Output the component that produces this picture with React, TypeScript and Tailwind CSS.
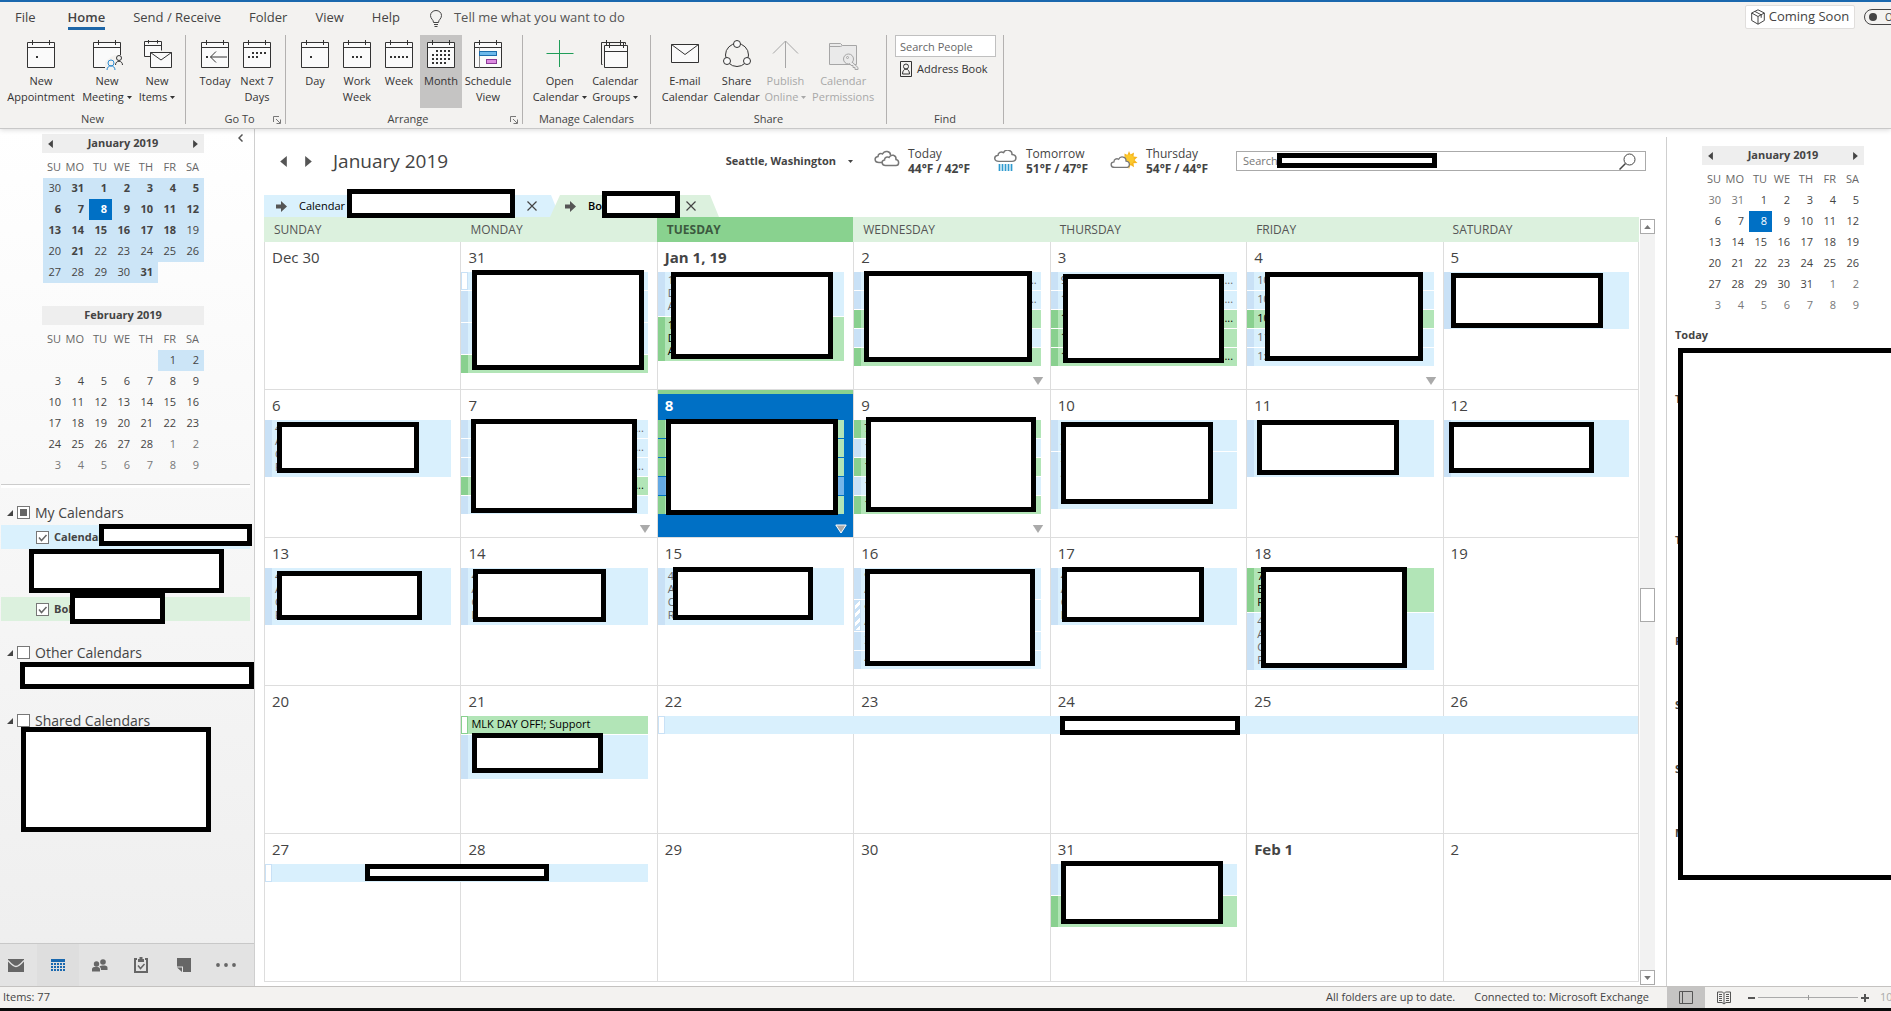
import type { ReactNode } from "react";
import clsx from "clsx";

/* ---------- small shared pieces ---------- */

// Black-framed white box that hides private text
function Redaction({ className }: { className: string }) {
  return <div aria-hidden className={clsx("absolute z-10 border-5 border-black bg-white", className)} />;
}

function Caret({ className }: { className?: string }) {
  return (
    <svg width="5" height="3" viewBox="0 0 5 3" className={clsx("inline-block", className)}>
      <path d="M0 0h5L2.5 3z" fill="currentColor" />
    </svg>
  );
}

function Arrow({ dir, className }: { dir: "left" | "right"; className?: string }) {
  return (
    <svg width="6" height="10" viewBox="0 0 6 10" className={className}>
      <path d={dir === "left" ? "M6 0v10L0 5z" : "M0 0v10l6-5z"} fill="currentColor" />
    </svg>
  );
}

/* ---------- ribbon icons ---------- */

function Dots({ rows }: { rows: [number, number[]][] }) {
  return (
    <>
      {rows.map(([y, xs]) => xs.map((x) => <rect key={`${x}-${y}`} x={x} y={y} width="2" height="2" fill="#333" stroke="none" />))}
    </>
  );
}

function CalIcon({ children }: { children?: ReactNode }) {
  return (
    <svg width="32" height="30" viewBox="0 0 32 30" fill="none" stroke="#333">
      <path d="M2.5 2.5h27v25h-27z" fill="#fafafa" />
      <path d="M2.5 7.5h27M7.5 0v5M24.5 0v5" />
      {children}
    </svg>
  );
}

const iconToday = (
  <CalIcon>
    <Dots rows={[[16, [7]]]} />
    <path d="M11.5 17H28M17 11.5L11.5 17l5.5 5.5" />
  </CalIcon>
);

const iconMeeting = (
  <svg width="32" height="30" viewBox="0 0 32 30" fill="none" stroke="#333">
    <path d="M2.5 2.5h27v25h-27z" fill="#fafafa" />
    <path d="M2.5 7.5h27M7.5 0v5M24.5 0v5" />
    <path d="M14 30V22l6-5 4-2h8v15z" fill="#f3f2f0" stroke="none" />
    <circle cx="28" cy="18" r="2.5" />
    <path d="M24.5 25c0-5 7-5 7 0" />
    <circle cx="20" cy="23" r="3" stroke="#2b8ad0" />
    <path d="M16 30c0-5.5 8-5.5 8 0" stroke="#2b8ad0" />
  </svg>
);

const iconItems = (
  <svg width="32" height="30" viewBox="0 0 32 30" fill="none" stroke="#333">
    <path d="M9.5 16.5h-6v-15h17v9" fill="#fafafa" />
    <path d="M3.5 5.5h17M7.5 0v3.5M16.5 0v3.5" />
    <path d="M9.5 12.5h21v15h-21z" fill="#fafafa" />
    <path d="M9.5 12.5L20 20l10.5-7.5" />
  </svg>
);

const iconSchedule = (
  <CalIcon>
    <path d="M7.5 7.5v20" stroke="#888" />
    <rect x="7.5" y="11.5" width="17" height="4" fill="#6cb8ea" stroke="#1c6cab" />
    <rect x="14.5" y="19.5" width="10" height="4" fill="#dc8be0" stroke="#8b3a96" />
  </CalIcon>
);

const iconPlus = (
  <svg width="32" height="30" viewBox="0 0 32 30" stroke="#1f9d58">
    <path d="M2.5 13.5h27M15.5 0v27" />
  </svg>
);

const iconGroups = (
  <svg width="32" height="30" viewBox="0 0 32 30" fill="none" stroke="#333">
    <path d="M3.5 24.5h-1v-22h24v2M7.5 0v5M21.5 0v5" />
    <path d="M5.5 5.5h23v22h-23z" fill="#fafafa" />
    <path d="M5.5 11.5h23M10.5 3v5M24.5 3v5" />
  </svg>
);

const iconMail = (
  <svg width="32" height="30" viewBox="0 0 32 30" fill="none" stroke="#333">
    <path d="M2.5 4.5h27v18h-27z" fill="#fafafa" />
    <path d="M2.5 4.5L16 14.5l13.5-10" />
  </svg>
);

const iconShare = (
  <svg width="32" height="30" viewBox="0 0 32 30" fill="none" stroke="#333">
    <circle cx="16" cy="15" r="11.5" />
    <circle cx="16" cy="4" r="3.5" fill="#fafafa" />
    <circle cx="6" cy="21" r="3.5" fill="#fafafa" />
    <circle cx="26" cy="21" r="3.5" fill="#fafafa" />
  </svg>
);

const iconPublish = (
  <svg width="32" height="30" viewBox="0 0 32 30" fill="none" stroke="#a6a6a6">
    <path d="M16.5 28V1M4 13.5L16.5 1 29 13.5" />
  </svg>
);

const iconPermissions = (
  <svg width="32" height="30" viewBox="0 0 32 30" fill="none" stroke="#a6a6a6">
    <path d="M2.5 24.5v-21h11l2 2h14v19z" fill="#eaeaea" />
    <path d="M2.5 6.5h11l2-1" />
    <circle cx="21.5" cy="19" r="5" fill="#eaeaea" />
    <circle cx="20.5" cy="17.5" r="1" />
    <path d="M25 22l6 5.5v2h-3v-2h-2v-2h-2l-1.500-2" fill="#eaeaea" />
  </svg>
);

/* ---------- ribbon ---------- */

type RibbonButtonProps = {
  icon: ReactNode;
  lines: string[];
  width: string;
  caret?: boolean;
  active?: boolean;
  disabled?: boolean;
};

function RibbonButton({ icon, lines, width, caret, active, disabled }: RibbonButtonProps) {
  return (
    <button
      type="button"
      disabled={disabled}
      className={clsx(
        "flex h-[73px] flex-col items-center whitespace-nowrap pt-[5px] text-[11px] leading-4",
        width,
        active && "bg-[#c5c4c3]",
        disabled ? "text-[#a8a8a8]" : "text-[#333]",
      )}
    >
      {icon}
      <span className="mt-[3px]">{lines[0]}</span>
      {lines[1] && (
        <span className="flex items-center gap-[3px]">
          {lines[1]}
          {caret && <Caret />}
        </span>
      )}
    </button>
  );
}

function RibbonGroup({ title, width, launcher, children }: { title: string; width: string; launcher?: boolean; children: ReactNode }) {
  return (
    <section className={clsx("flex h-[89px] shrink-0 flex-col border-r border-[#b3b1b0]", width)}>
      <div className="flex flex-1 items-start">{children}</div>
      <div className="relative text-center text-[11px] leading-[10px] text-[#444]">
        {title}
        {launcher && (
          <button type="button" aria-label={`${title} options`} className="absolute right-1 top-0.5">
            <svg width="8" height="8" viewBox="0 0 8 8" fill="none" stroke="#777">
              <path d="M.5 6V.5H6M3 3l4 4M7.5 3.5v4h-4" />
            </svg>
          </button>
        )}
      </div>
    </section>
  );
}

function Ribbon() {
  return (
    <div className="flex pt-px">
      <RibbonGroup title="New" width="w-[186px]">
        <RibbonButton icon={<CalIcon><Dots rows={[[16, [11]]]} /></CalIcon>} lines={["New", "Appointment"]} width="w-[82px]" />
        <RibbonButton icon={iconMeeting} lines={["New", "Meeting"]} width="w-[50px]" caret />
        <RibbonButton icon={iconItems} lines={["New", "Items"]} width="w-[50px]" caret />
      </RibbonGroup>
      <RibbonGroup title="Go To" width="w-[100px] pl-2" launcher>
        <RibbonButton icon={iconToday} lines={["Today"]} width="w-[42px]" />
        <RibbonButton
          icon={<CalIcon><Dots rows={[[12, [11, 15, 19, 23]], [16, [7, 11, 15]]]} /></CalIcon>}
          lines={["Next 7", "Days"]}
          width="w-[42px]"
        />
      </RibbonGroup>
      <RibbonGroup title="Arrange" width="w-[237px] pl-2" launcher>
        <RibbonButton icon={<CalIcon><Dots rows={[[16, [11]]]} /></CalIcon>} lines={["Day"]} width="w-[42px]" />
        <RibbonButton icon={<CalIcon><Dots rows={[[16, [11, 15, 19]]]} /></CalIcon>} lines={["Work", "Week"]} width="w-[42px]" />
        <RibbonButton icon={<CalIcon><Dots rows={[[16, [7, 11, 15, 19, 23]]]} /></CalIcon>} lines={["Week"]} width="w-[42px]" />
        <RibbonButton
          icon={
            <CalIcon>
              <Dots rows={[[10, [11, 15, 19, 23]], [14, [7, 11, 15, 19, 23]], [18, [7, 11, 15, 19, 23]], [22, [7, 11, 15, 19]]]} />
            </CalIcon>
          }
          lines={["Month"]}
          width="w-[42px]"
          active
        />
        <RibbonButton icon={iconSchedule} lines={["Schedule", "View"]} width="w-[52px]" />
      </RibbonGroup>
      <RibbonGroup title="Manage Calendars" width="w-[128px] px-2">
        <RibbonButton icon={iconPlus} lines={["Open", "Calendar"]} width="w-[58px]" caret />
        <RibbonButton icon={iconGroups} lines={["Calendar", "Groups"]} width="w-[54px]" caret />
      </RibbonGroup>
      <RibbonGroup title="Share" width="w-[236px] px-2">
        <RibbonButton icon={iconMail} lines={["E-mail", "Calendar"]} width="w-[52px]" />
        <RibbonButton icon={iconShare} lines={["Share", "Calendar"]} width="w-[52px]" />
        <RibbonButton icon={iconPublish} lines={["Publish", "Online"]} width="w-[46px]" caret disabled />
        <RibbonButton icon={iconPermissions} lines={["Calendar", "Permissions"]} width="w-[70px]" disabled />
      </RibbonGroup>
      <RibbonGroup title="Find" width="w-[117px] px-2">
        <div className="w-full">
          <input
            aria-label="Search People"
            placeholder="Search People"
            className="block h-[22px] w-[101px] border border-[#c0c0c0] bg-white px-1 text-[11px] outline-none placeholder:text-[#666]"
          />
          <button type="button" className="mt-1 flex items-center gap-[5px] whitespace-nowrap pl-[5px] text-[11px] text-[#333]">
            <svg width="12" height="16" viewBox="0 0 12 16" fill="none" stroke="#333">
              <path d="M.5.5h11v15H.5z" />
              <circle cx="6" cy="5.5" r="2.5" />
              <path d="M2.500 13c0-6.500 7-6.500 7 0z" />
            </svg>
            Address Book
          </button>
        </div>
      </RibbonGroup>
    </div>
  );
}

function Header() {
  const tab = "h-7 leading-[30px]";
  return (
    <header className="relative z-20 h-[129px] border-b border-[#c8c8c8] border-t-2 border-t-[#1a68ae] bg-[#f3f2f0] shadow-[0_1px_5px_rgba(0,0,0,0.15)]">
      <div className="flex h-8 items-start text-[13px] text-[#444]">
        <nav className="flex items-start gap-7 pl-[15px]">
          <a href="#file" className={clsx(tab, "mr-1")}>File</a>
          <a href="#home" className="h-7 border-b-3 border-[#1c66a8] font-semibold leading-[30px]">Home</a>
          <a href="#send" className={tab}>Send / Receive</a>
          <a href="#folder" className={tab}>Folder</a>
          <a href="#view" className={tab}>View</a>
          <a href="#help" className={tab}>Help</a>
        </nav>
        <button type="button" className="ml-[30px] flex h-8 items-center gap-3 text-[#555]">
          <svg width="12" height="17" viewBox="0 0 12 17" fill="none" stroke="#444">
            <path d="M3.5 12.5C3.5 9.5.5 9 .5 5.5a5.500 5 0 0 1 11 0c0 3.500-3 4-3 7zM4 14.5h4M4.500 16.500h3" />
          </svg>
          Tell me what you want to do
        </button>
        <div className="ml-auto flex items-center gap-[9px] pt-[3px]">
          <button type="button" className="flex h-6 w-[110px] items-center justify-center gap-1 whitespace-nowrap rounded-xs border border-[#e0dedc] bg-white">
            <svg width="14" height="16" viewBox="0 0 14 16" fill="none" stroke="#444" className="shrink-0">
              <path d="M7 .8l6.300 3.200v7.500L7 15.200.700 11.500V4zM.700 4L7 7.500 13.300 4M7 7.500v7.700M3.800 2.400l6.400 3.400v3" />
            </svg>
            Coming Soon
          </button>
          <button type="button" role="switch" aria-checked="false" className="-mr-6 flex h-4 w-[51px] items-center gap-2 rounded-full border border-[#444] pl-1 text-[10px]">
            <span className="size-2 rounded-full bg-[#444]" />
            Off
          </button>
        </div>
      </div>
      <Ribbon />
    </header>
  );
}

/* ---------- date navigators ---------- */

type MiniProps = {
  title: string;
  first: number; // offset of the first day shown
  prevDays: number[];
  count: number;
  total: number;
  bold?: number[];
  shaded?: (i: number) => boolean;
  today?: number;
  arrows?: boolean;
};

function MiniCalendar({ title, first, prevDays, count, total, bold = [], shaded, today, arrows }: MiniProps) {
  const cells = Array.from({ length: total }, (_, i) => {
    if (i < first) return { n: prevDays[i] ?? 0, out: true };
    const n = i - first + 1;
    return n <= count ? { n, out: false } : { n: n - count, out: true };
  });
  const rows = Array.from({ length: Math.ceil(total / 7) }, (_, w) => cells.slice(w * 7, w * 7 + 7));

  return (
    <div className="w-[162px]">
      <div className="flex h-[19px] items-center justify-between bg-[#eee] px-1.5 text-[11px] font-bold text-[#444]">
        {arrows ? <button type="button" aria-label="Previous month"><Arrow dir="left" className="h-2 w-[5px]" /></button> : <span />}
        {title}
        {arrows ? <button type="button" aria-label="Next month"><Arrow dir="right" className="h-2 w-[5px]" /></button> : <span />}
      </div>
      <table className="ml-px w-[161px] table-fixed border-collapse text-right text-[11px] text-[#444]">
        <thead>
          <tr className="h-[25px]">
            {["SU", "MO", "TU", "WE", "TH", "FR", "SA"].map((d) => (
              <th key={d} className="p-0 pr-[5px] pt-[3px] font-normal text-[#666]">
                <span className="flex justify-end">{d}</span>
              </th>
            ))}
          </tr>
        </thead>
        <tbody>
          {rows.map((week, w) => (
            <tr key={w} className="h-[21px]">
              {week.map(({ n, out }, d) => {
                const i = w * 7 + d;
                const isToday = today !== undefined && !out && n === today;
                return (
                  <td
                    key={d}
                    className={clsx(
                      "p-0 pb-px pr-[5px] leading-5",
                      isToday ? "bg-[#0070c5] text-white" : shaded?.(i) && n > 0 && "bg-[#cce5f7]",
                      bold.includes(i) && "font-bold",
                      out && !shaded?.(i) && "text-[#777]",
                    )}
                  >
                    {n > 0 ? n : ""}
                  </td>
                );
              })}
            </tr>
          ))}
        </tbody>
      </table>
    </div>
  );
}

/* ---------- left pane ---------- */

function Check({ state, label }: { state: "on" | "off" | "mixed"; label: string }) {
  return (
    <span className="relative flex size-[13px] shrink-0">
      <input
        type="checkbox"
        aria-label={label}
        defaultChecked={state === "on"}
        className="size-[13px] appearance-none border border-[#777] bg-white"
      />
      {state === "on" && (
        <svg viewBox="0 0 13 13" fill="none" stroke="#666" strokeWidth="1.5" className="pointer-events-none absolute inset-0">
          <path d="M3 6.5l2.500 3L10.500 4" />
        </svg>
      )}
      {state === "mixed" && <span className="pointer-events-none absolute inset-[3px] bg-[#666]" />}
    </span>
  );
}

function GroupHeading({ name, state }: { name: string; state: "off" | "mixed" }) {
  return (
    <div className="flex h-[25px] items-center pl-[7px] text-sm text-[#444]">
      <svg width="6" height="6" viewBox="0 0 6 6" className="mr-1">
        <path d="M6 0v6H0z" fill="#444" />
      </svg>
      <Check state={state} label={name} />
      <span className="ml-[5px]">{name}</span>
    </div>
  );
}

function CalendarRow({ name, tint }: { name: string; tint: string }) {
  return (
    <div className={clsx("ml-px mr-1 flex h-6 items-center gap-[5px] pl-[35px] text-[11px] font-bold text-[#444]", tint)}>
      <Check state="on" label={name} />
      {name}
    </div>
  );
}

function NavButton({ label, width, children }: { label: string; width: string; children: ReactNode }) {
  return (
    <button type="button" aria-label={label} className={clsx("flex items-center justify-center", width)}>
      {children}
    </button>
  );
}

// Cell indexes of the days that have appointments
const janBold = [1, 2, 3, 4, 5, 6, 7, 8, 9, 10, 11, 12, 13, 14, 15, 16, 17, 18, 19, 22, 32];

function Sidebar() {
  return (
    <aside className="flex w-[255px] shrink-0 flex-col border-r border-[#cfcfcf] bg-gradient-to-b from-white to-[#eee]">
      <div className="relative pl-[42px] pt-[5px]">
        <MiniCalendar title="January 2019" first={2} prevDays={[30, 31]} count={31} total={33} bold={janBold} shaded={(i) => i < 33} today={8} arrows />
        <div className="h-[23px]" />
        <MiniCalendar title="February 2019" first={5} prevDays={[]} count={28} total={42} shaded={(i) => i < 7} />
        <button type="button" aria-label="Minimize the folder pane" className="absolute right-[11px] top-[5px]">
          <svg width="5" height="8" viewBox="0 0 5 8" fill="none" stroke="#555" strokeWidth="1.5">
            <path d="M4.500.5L1 4l3.500 3.500" />
          </svg>
        </button>
      </div>
      <div className="ml-px mr-1 mt-2 h-1 border-t border-[#ccc] bg-white" />

      <div className="relative flex-1 pt-3">
        <GroupHeading name="My Calendars" state="mixed" />
        <CalendarRow name="Calendar" tint="bg-[#daf1fd]" />
        <div className="h-12" />
        <CalendarRow name="Bob" tint="bg-[#dcf1de]" />
        <div className="h-[19px]" />
        <GroupHeading name="Other Calendars" state="off" />
        <div className="h-[43px]" />
        <GroupHeading name="Shared Calendars" state="off" />
        <Redaction className="left-[99px] top-9 h-[22px] w-[153px]" />
        <Redaction className="left-[29px] top-[61px] h-11 w-[195px]" />
        <Redaction className="left-[70px] top-[105px] h-[31px] w-[95px]" />
        <Redaction className="left-5 top-[174px] h-[27px] w-[234px]" />
        <Redaction className="left-[21px] top-[239px] h-[105px] w-[190px]" />
      </div>

      <nav className="flex h-[43px] items-stretch border-t border-[#c8c8c8] bg-[#e3e3e3] text-[#666]">
        <NavButton label="Mail" width="w-[37px] pr-[5px]">
          <svg width="16" height="13" viewBox="0 0 16 13">
            <path d="M0 0h16v13H0z" fill="currentColor" />
            <path d="M0 1.500C3 5 6 7.500 8 7.500S13 5 16 1.500" fill="none" stroke="#e3e3e3" strokeWidth="1.3" />
          </svg>
        </NavButton>
        <NavButton label="Calendar" width="w-[42px] bg-[#dedede]">
          <svg width="14" height="13" viewBox="0 0 14 13" fill="#1a68ae">
            <path d="M0 0h14v3H0z" />
            {[4, 7, 10].map((y) => [0, 3, 6, 9, 12].map((x) => <rect key={`${x}-${y}`} x={x} y={y} width="2" height="2" />))}
          </svg>
        </NavButton>
        <NavButton label="People" width="w-[41px]">
          <svg width="16" height="13" viewBox="0 0 16 13" fill="currentColor">
            <circle cx="4.500" cy="5" r="2.700" />
            <circle cx="11" cy="3" r="2.800" />
            <path d="M0 12.500V10c0-3 8-3 8 0v2.500zM7.500 7.500c2-1.500 8-1.500 8 1V11H9c0-2-.5-2.500-1.500-3.500z" />
          </svg>
        </NavButton>
        <NavButton label="Tasks" width="w-[42px]">
          <svg width="14" height="16" viewBox="0 0 14 16" fill="none" stroke="currentColor" strokeWidth="2">
            <path d="M3 2H1v13h12V2h-2" />
            <path d="M4 3.500h6M7 0v3" strokeWidth="3" />
            <path d="M4 8.500l2.500 3L10.500 7" strokeWidth="1.5" />
          </svg>
        </NavButton>
        <NavButton label="Notes" width="w-[43px]">
          <svg width="14" height="14" viewBox="0 0 14 14" fill="currentColor">
            <path d="M0 0h14v14H6V8.500H0z" />
            <path d="M0 9.500h5V14z" />
          </svg>
        </NavButton>
        <NavButton label="More" width="w-[41px]">
          <svg width="20" height="4" viewBox="0 0 20 4" fill="currentColor">
            <circle cx="2" cy="2" r="1.900" />
            <circle cx="10" cy="2" r="1.900" />
            <circle cx="18" cy="2" r="1.900" />
          </svg>
        </NavButton>
      </nav>
    </aside>
  );
}

/* ---------- month view ---------- */

type Ev = {
  c: "blue" | "green" | "busy";
  lines?: string[];
  n?: number; // text rows the event takes
  bar?: "free" | "tentative";
  more?: boolean;
};

type Day = { label: string; bold?: boolean; evs?: Ev[]; box?: string; overflow?: boolean; today?: boolean };

const b = (...lines: string[]): Ev => ({ c: "blue", lines });
const g = (...lines: string[]): Ev => ({ c: "green", lines });
const more = (e: Ev): Ev => ({ ...e, more: true });

const weeks: Day[][] = [
  [
    { label: "Dec 30" },
    { label: "31", evs: [{ c: "blue", bar: "free" }, { c: "blue", n: 2 }, { c: "blue", n: 2 }, { c: "green" }], box: "left-[11px] top-7 h-[100px] w-[172px]" },
    { label: "Jan 1, 19", bold: true, evs: [b("1", "D", "A"), g("1", "D", "A")], box: "left-[13px] top-[30px] h-[87px] w-[162px]" },
    { label: "2", evs: [more(b("9")), more(b("9")), g("9"), b(), g()], box: "left-2.5 top-[29px] h-[91px] w-[168px]", overflow: true },
    { label: "3", evs: [more(b("9")), more(b("1")), more(g("1")), g("1"), more(g("1"))], box: "left-3 top-8 h-[89px] w-[161px]" },
    { label: "4", evs: [b("10"), b("10"), g("10"), b("11"), b("1:")], box: "left-[18px] top-[30px] h-[89px] w-[158px]", overflow: true },
    { label: "5", evs: [{ c: "blue", n: 4 }], box: "left-[7px] top-[31px] h-[55px] w-[152px]" },
  ],
  [
    { label: "6", evs: [b("4", "A", "C", "R")], box: "left-3 top-8 h-[51px] w-[142px]" },
    { label: "7", evs: [more(b()), more(b()), more(b()), more(g()), b()], box: "left-2.5 top-[29px] h-[94px] w-[166px]", overflow: true },
    { label: "8", bold: true, today: true, evs: [g(), g(), g(), { c: "busy" }, g()], box: "left-2 top-[29px] h-24 w-[172px]", overflow: true },
    { label: "9", evs: [g("7"), b("1"), g("1"), b("1"), g("1")], box: "left-3 top-[27px] h-[95px] w-[170px]", overflow: true },
    { label: "10", evs: [b("1", "A"), b("4", "A", "C", "R")], box: "left-2.5 top-8 h-[82px] w-[152px]" },
    { label: "11", evs: [b("4", "A", "C", "R")], box: "left-2.5 top-[30px] h-[55px] w-[142px]" },
    { label: "12", evs: [{ c: "blue", n: 4 }], box: "left-[5px] top-8 h-[51px] w-[145px]" },
  ],
  [
    { label: "13", evs: [b("4", "A", "C", "R")], box: "left-3 top-[33px] h-[49px] w-[145px]" },
    { label: "14", evs: [b("4", "A", "C", "R")], box: "left-3 top-[31px] h-[53px] w-[133px]" },
    { label: "15", evs: [b("4", "A", "C", "R")], box: "left-[15px] top-[29px] h-[53px] w-[140px]" },
    { label: "16", evs: [b("9", "A"), { ...b("9", "A"), bar: "tentative" }, b("3"), b("4")], box: "left-[11px] top-[31px] h-[97px] w-[170px]" },
    { label: "17", evs: [b("4", "A", "C", "R")], box: "left-[11px] top-[29px] h-[55px] w-[142px]" },
    { label: "18", evs: [g("7", "B", "R"), b("4", "A", "C", "R")], box: "left-3.5 top-[29px] h-[101px] w-[146px]" },
    { label: "19" },
  ],
  [
    { label: "20" },
    { label: "21", evs: [{ c: "green", lines: ["MLK DAY OFF!; Support"], bar: "free" }, { c: "blue", n: 3 }], box: "left-[11px] top-[47px] h-10 w-[131px]" },
    { label: "22" },
    { label: "23" },
    { label: "24" },
    { label: "25" },
    { label: "26" },
  ],
  [
    { label: "27" },
    { label: "28" },
    { label: "29" },
    { label: "30" },
    { label: "31", evs: [{ c: "blue", n: 2 }, { c: "green", n: 2 }], box: "left-2.5 top-[27px] h-[63px] w-[162px]" },
    { label: "Feb 1", bold: true },
    { label: "2" },
  ],
];

// Multi-day bars, drawn over the cells of their week
const spans: Record<number, { cols: string; box: string }> = {
  3: { cols: "col-start-3 col-span-5 mr-px", box: "left-[41%] top-0 h-[19px] w-[180px]" },
  4: { cols: "col-start-1 col-span-2 mr-[9px]", box: "left-[26%] top-0 h-[17px] w-[184px]" },
};

const colStart = ["col-start-1", "col-start-2", "col-start-3", "col-start-4", "col-start-5", "col-start-6", "col-start-7"];
const evHeight = ["", "h-[18px]", "h-[31px]", "h-11", "h-[57px]"];
const evBody = { blue: "bg-[#d9f0fd] text-[#666]", green: "bg-[#b2e5b7] text-black", busy: "bg-[#75b5e8] text-white" };
const evBar = { blue: "bg-[#c9e1f6]", green: "bg-[#89d08f]", busy: "bg-[#64a9e3]" };
const freeBar = { blue: "border border-[#c9e1f6] bg-white", green: "border border-[#89d08f] bg-white", busy: "bg-white" };

function EventItem({ ev }: { ev: Ev }) {
  const lines = ev.lines ?? [];
  const n = ev.n ?? Math.max(1, lines.length);
  return (
    <div className={clsx("flex text-[11px] leading-[13px]", evHeight[n], evBody[ev.c])}>
      {ev.bar === "tentative" ? (
        <span className="w-[7px] border border-[#c9e1f6] bg-[repeating-linear-gradient(135deg,#c9e1f6_0_3px,#fff_3px_6px)]" />
      ) : (
        <span className={clsx("w-[7px]", ev.bar === "free" ? freeBar[ev.c] : evBar[ev.c])} />
      )}
      <span className="flex-1 whitespace-nowrap pl-[3px] pt-px">
        {lines.map((l, i) => (
          <span key={i} className="block">{l}</span>
        ))}
      </span>
      {ev.more && <span className="pr-1 pt-px">...</span>}
    </div>
  );
}

function DayCell({ day, col }: { day: Day; col: number }) {
  return (
    <div
      className={clsx(
        "relative row-start-1 border-b border-l border-[#ddd]",
        colStart[col],
        col === 6 && "border-r",
      )}
    >
      <div className={clsx("h-full", day.today && "bg-[#0070c5]")}>
        <div
          className={clsx(
            "h-[30px] pl-[7px] text-[15px]",
            day.today ? "border-t-4 border-[#89d28f] leading-[22px] text-white" : "leading-[30px] text-[#444]",
            day.bold && "font-bold",
          )}
        >
          {day.label}
        </div>
        <div className="mr-[9px] flex flex-col gap-px">
          {day.evs?.map((ev, i) => <EventItem key={i} ev={ev} />)}
        </div>
      </div>
      {day.box && <Redaction className={day.box} />}
      {day.overflow && (
        <svg width="12" height="10" viewBox="0 0 12 10" className="absolute bottom-[3px] right-1.5">
          <path d="M.8 1h10.400L6 9z" fill="#aaa" stroke={day.today ? "#fff" : "none"} />
        </svg>
      )}
    </div>
  );
}

function MonthGrid() {
  return (
    <div className="flex min-w-0 flex-1 flex-col">
      <div className="grid h-[25px] grid-cols-7 bg-[#dcf1de] text-xs leading-[25px] text-[#555]">
        {["SUNDAY", "MONDAY", "TUESDAY", "WEDNESDAY", "THURSDAY", "FRIDAY", "SATURDAY"].map((d) => (
          <div key={d} className={clsx("pl-2.5", d === "TUESDAY" && "bg-[#89d28f] font-bold text-[#3c5a40]")}>
            {d}
          </div>
        ))}
      </div>
      <div className="grid flex-1 grid-rows-5">
        {weeks.map((week, w) => (
          <div key={w} className="grid min-h-[148px] grid-cols-7">
            {week.map((day, i) => (
              <DayCell key={i} day={day} col={i} />
            ))}
            {spans[w] && (
              <div className={clsx("relative row-start-1 ml-px mt-[30px] flex h-[18px] bg-[#d9f0fd]", spans[w].cols)}>
                <span className="w-[7px] border border-[#c9e1f6] bg-white" />
                <Redaction className={spans[w].box} />
              </div>
            )}
          </div>
        ))}
      </div>
    </div>
  );
}

function ScrollBar() {
  const box = "absolute left-0 flex w-[15px] items-center justify-center border border-[#aaa] bg-white";
  return (
    <div className="relative ml-px mt-0.5 -mb-[3px] w-[15px] bg-[#f2f2f2]">
      <button type="button" aria-label="Scroll up" className={clsx(box, "top-0 h-[15px]")}>
        <Caret className="h-1 w-[7px] rotate-180 text-[#777]" />
      </button>
      <div className={clsx(box, "top-[369px] h-[34px]")} />
      <button type="button" aria-label="Scroll down" className={clsx(box, "bottom-0 h-[15px]")}>
        <Caret className="h-1 w-[7px] text-[#777]" />
      </button>
    </div>
  );
}

/* ---------- calendar header: title, weather, search, tabs ---------- */

const cloud = "M5 14.500C-.5 14.500-.5 8.500 4 8c0-3 3-4.500 5.500-3 2-4.500 9-3 8.500 2 5.500.5 5 7.500 0 7.500z";

const weather = [
  {
    day: "Today",
    temp: "44°F / 42°F",
    icon: (
      <svg width="26" height="22" viewBox="0 0 26 22" fill="none" stroke="#777" strokeWidth="1.5">
        <path d="M8.500 12.500H5c-5 0-5-5.500-1-6 0-3 3-3.500 4.500-2.500 2-4 8-3 8 1" />
        <path d="M11.500 15.500c-4 0-4.500-5-1-5.500 0-3 3-3.500 4.500-2.500 2-4 7.500-2.500 7 2 3.500.5 3.500 6 0 6z" fill="#fff" />
      </svg>
    ),
  },
  {
    day: "Tomorrow",
    temp: "51°F / 47°F",
    icon: (
      <svg width="26" height="22" viewBox="0 0 26 22" fill="none">
        <path d={cloud} stroke="#777" strokeWidth="1.5" transform="translate(2 -2) scale(1 .92)" />
        <path d="M7.500 14v7M10.500 14v7M13.500 14v7M16.500 14v7M19.500 14v7" stroke="#2f9bd0" strokeWidth="1.7" />
      </svg>
    ),
  },
  {
    day: "Thursday",
    temp: "54°F / 44°F",
    icon: (
      <svg width="28" height="22" viewBox="0 0 28 22" fill="none">
        <path d="M19 1l1.500 3.500 3.500-2-.5 4 4 .5-3 3 3 3-4 .3.500 4-3.500-2.300L19 19l-1.500-4-3 2V3.500l3 1.500z" fill="#f6b51e" />
        <circle cx="19" cy="9.500" r="5" fill="#fbc92e" />
        <path d={cloud} stroke="#777" strokeWidth="1.5" fill="#fff" transform="translate(.5 5) scale(.86)" />
      </svg>
    ),
  },
];

function ViewHeader() {
  return (
    <div className="flex h-16 items-center text-[#444]">
      <button type="button" aria-label="Back" className="ml-4 text-[#555]"><Arrow dir="left" className="h-[11px] w-[7px]" /></button>
      <button type="button" aria-label="Forward" className="ml-[18px] text-[#555]"><Arrow dir="right" className="h-[11px] w-[7px]" /></button>
      <h1 className="ml-[21px] whitespace-nowrap text-[19px]">January 2019</h1>
      <div className="ml-auto flex items-center whitespace-nowrap">
        <button type="button" className="flex items-center gap-3 text-[11px] font-bold">
          Seattle, Washington
          <Caret />
        </button>
        {weather.map((w) => (
          <div key={w.day} className="ml-[21px] flex w-[97px] items-center gap-2 text-xs leading-[15px]">
            <span className="shrink-0">{w.icon}</span>
            <div className="pb-px">
              <div>{w.day}</div>
              <div className="font-bold">{w.temp}</div>
            </div>
          </div>
        ))}
      </div>
      <label className="relative ml-[29px] mr-5 flex h-5 w-[410px] shrink-0 items-center border border-[#aaa]">
        <span className="sr-only">Search calendars</span>
        <input placeholder="Search" className="w-full pl-1.5 text-[11px] outline-none placeholder:text-[#777]" />
        <svg width="17" height="17" viewBox="0 0 17 17" fill="none" stroke="#444" className="mr-[9px] shrink-0">
          <circle cx="10.500" cy="6.500" r="5.500" />
          <path d="M6.500 10.500l-6 6" strokeWidth="1.5" />
        </svg>
        <Redaction className="left-10 top-px h-[15px] w-[160px]" />
      </label>
    </div>
  );
}

function TabArrow() {
  return (
    <svg width="11" height="11" viewBox="0 0 11 11">
      <path d="M0 3.500h5V0l6 5.500L5 11V7.500H0z" fill="#555" />
    </svg>
  );
}

function CloseX() {
  return (
    <svg width="10" height="10" viewBox="0 0 10 10" stroke="#444" strokeWidth="1.2">
      <path d="M.5.5l9 9M9.500.5l-9 9" />
    </svg>
  );
}

function CalendarTabs() {
  return (
    <div className="flex h-6 items-end text-[11px] text-black">
      <div className="relative flex h-[22px] w-[296px] items-center bg-[#daf1fd] pl-3">
        <TabArrow />
        <span className="ml-3">Calendar</span>
        <button type="button" aria-label="Close Calendar" className="ml-auto mr-[23px]"><CloseX /></button>
        <Redaction className="-top-1.5 left-[83px] h-[29px] w-[168px]" />
        <svg width="10" height="22" viewBox="0 0 10 22" className="absolute right-0 top-0">
          <path d="M1 0h9v22z" fill="#fff" />
          <path d="M10 0v22H0z" fill="#dcf1de" />
        </svg>
      </div>
      <div className="relative flex h-[22px] w-[159px] items-center bg-[#dcf1de] pl-[5px]">
        <TabArrow />
        <span className="ml-3 font-semibold">Bo</span>
        <button type="button" aria-label="Close Bo" className="ml-auto mr-[23px]"><CloseX /></button>
        <Redaction className="-top-1 left-[42px] h-[27px] w-[78px]" />
        <svg width="9" height="22" viewBox="0 0 9 22" className="absolute right-0 top-0">
          <path d="M0 0h9v22z" fill="#fff" />
        </svg>
      </div>
    </div>
  );
}

/* ---------- right pane ---------- */

function TodoBar() {
  return (
    <aside className="relative mt-2 w-[225px] shrink-0 overflow-hidden border-l border-[#cfcfcf] pl-2 pt-[9px]">
      <div className="pl-[27px]">
        <MiniCalendar title="January 2019" first={2} prevDays={[30, 31]} count={31} total={42} today={8} arrows />
      </div>
      <h2 className="mt-[11px] text-[11px] font-bold leading-4 text-[#444]">Today</h2>
      <ul className="mt-12 text-[11px] font-bold leading-4 text-[#444]">
        <li className="h-[141px]">T</li>
        <li className="h-[101px]">T</li>
        <li className="h-16">F</li>
        <li className="h-16">S</li>
        <li className="h-16">S</li>
        <li>M</li>
      </ul>
      <Redaction className="-right-2 left-[11px] top-[211px] h-[532px]" />
    </aside>
  );
}

function StatusBar() {
  return (
    <footer className="flex h-[22px] items-center overflow-hidden border-t border-[#c4c2c0] bg-[#f3f2f0] text-[11px] text-[#444]">
      <span className="pl-[3px]">Items: 77</span>
      <span className="ml-auto">All folders are up to date.</span>
      <span className="ml-[19px] mr-[18px]">Connected to: Microsoft Exchange</span>
      <div className="flex h-full w-[224px] shrink-0 items-center">
        <button type="button" aria-label="Normal view" className="flex h-full w-[38px] shrink-0 items-center justify-center bg-[#c5c4c3]">
          <svg width="14" height="13" viewBox="0 0 14 13" fill="none" stroke="#555">
            <path d="M.5.5h13v12H.5zM3.500.5v12" />
          </svg>
        </button>
        <button type="button" aria-label="Reading view" className="flex h-full w-[38px] shrink-0 items-center justify-center">
          <svg width="14" height="14" viewBox="0 0 14 14" fill="none" stroke="#555">
            <path d="M7 2.500L5.500 1H.5v10.500H5L7 13l2-1.500h4.500V1H8.500zM7 2.500V13M2 3.500h3M2 5.500h3M2 7.500h3M2 9.500h3M9 3.500h3M9 5.500h3M9 7.500h3M9 9.500h3" />
          </svg>
        </button>
        <button type="button" aria-label="Zoom out" className="ml-[5px] shrink-0">
          <svg width="7" height="8" viewBox="0 0 7 8"><path d="M0 4h7" stroke="#555" strokeWidth="2" /></svg>
        </button>
        <input
          type="range"
          aria-label="Zoom"
          className="mx-[3px] h-px w-[100px] shrink-0 appearance-none bg-[#aaa] [&::-webkit-slider-thumb]:h-[5px] [&::-webkit-slider-thumb]:w-px [&::-webkit-slider-thumb]:appearance-none [&::-webkit-slider-thumb]:bg-[#999]"
        />
        <button type="button" aria-label="Zoom in" className="shrink-0">
          <svg width="8" height="8" viewBox="0 0 8 8"><path d="M0 4h8M4 0v8" stroke="#555" strokeWidth="2" /></svg>
        </button>
        <span className="ml-[11px] shrink-0 text-[#aaa]">100%</span>
      </div>
    </footer>
  );
}

export default function App() {
  return (
    <div className="flex min-h-screen flex-col overflow-hidden bg-white font-['Open_Sans','Noto_Sans',sans-serif]">
      <Header />
      <main className="flex flex-1">
        <Sidebar />
        <div className="flex min-w-0 flex-1 flex-col pb-1 pl-[9px]">
          <ViewHeader />
          <CalendarTabs />
          <div className="flex flex-1 pr-[11px]">
            <MonthGrid />
            <ScrollBar />
          </div>
        </div>
        <TodoBar />
      </main>
      <StatusBar />
      <div className="h-[3px] bg-[#0a0a0a]" />
    </div>
  );
}
